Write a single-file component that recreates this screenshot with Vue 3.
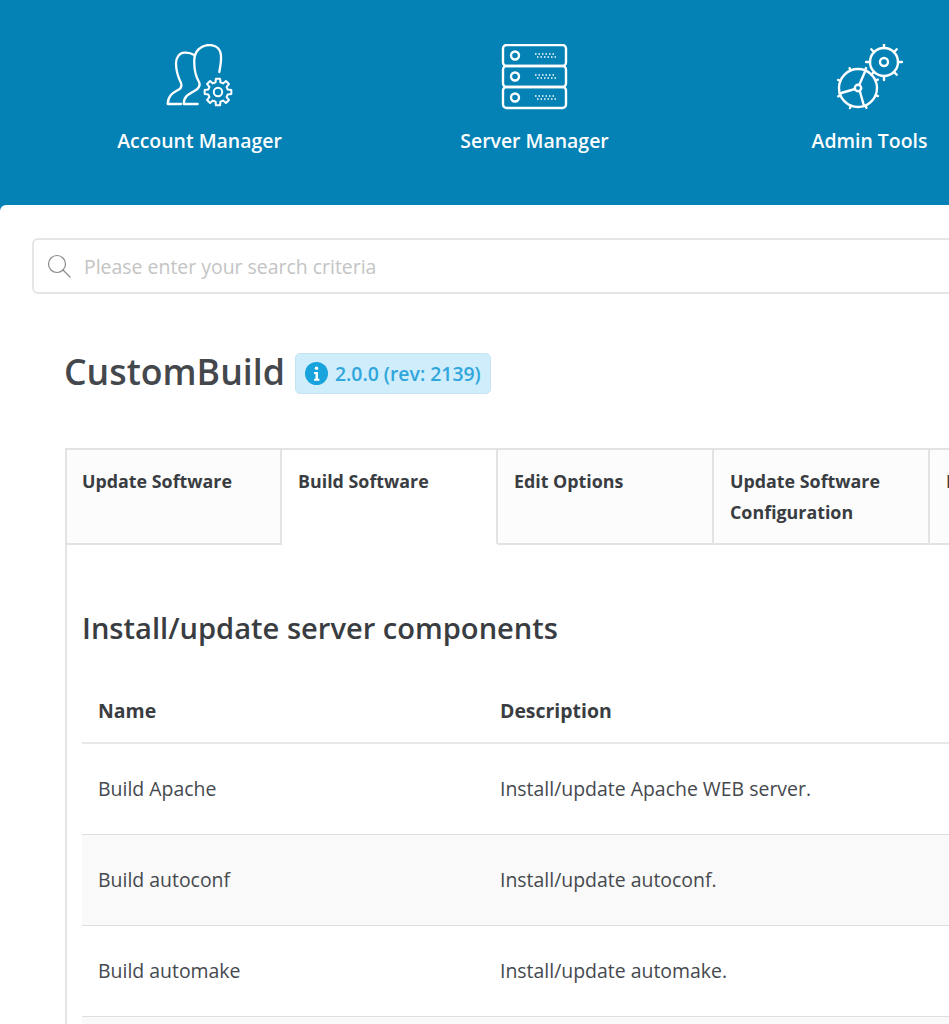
<script setup>
const tabs = [
  { label: 'Update Software' },
  { label: 'Build Software', active: true },
  { label: 'Edit Options' },
  { label: 'Update Software Configuration' },
  { label: 'PHP Extensions' },
]

const rows = [
  { name: 'Build Apache', desc: 'Install/update Apache WEB server.' },
  { name: 'Build autoconf', desc: 'Install/update autoconf.' },
  { name: 'Build automake', desc: 'Install/update automake.' },
]

const gearTeeth = [0, 45, 90, 135, 180, 225, 270, 315]

// outline of the small cog, one tooth every 45deg
const pt = (r, deg) => {
  const a = (deg - 90) * Math.PI / 180
  return `${(r * Math.cos(a)).toFixed(2)} ${(r * Math.sin(a)).toFixed(2)}`
}
const cogPath = gearTeeth.map((a) => {
  return `${a === 0 ? 'M' : 'L'}${pt(10, a - 14)}L${pt(13.5, a - 9)}L${pt(13.5, a + 9)}L${pt(10, a + 14)}`
}).join('') + 'Z'
</script>

<template>
  <div class="page">
    <header class="top">
      <a class="nav-item">
        <svg class="nav-icon" viewBox="0 0 70 66" width="70" height="66" fill="none" stroke="#fff" stroke-width="2.300" stroke-linecap="round" stroke-linejoin="round">
          <path d="M29.300 11C26 9 22 8.500 19.300 8.700 14 9 11 14 11 19.300 11 26 13 33 16 39 17 42 16 44 14.300 45.300 10 48 3 50 2.700 60H16" />
          <path d="M18.700 60C18.700 52 24 50 31 46 35 43 35 40 34 38 31 33 29 24 29.300 16 29.500 7 36 1 44.300 1 52 1 56 6 56 13 56.300 18 55 24 54.300 28M18.700 60H32.700" />
          <g transform="translate(53 48)" stroke-width="2">
            <path :d="cogPath" />
            <circle r="4.200" />
          </g>
        </svg>
        <span>Account Manager</span>
      </a>
      <a class="nav-item">
        <svg class="nav-icon" viewBox="0 0 70 66" width="70" height="66" fill="none" stroke="#fff" stroke-width="2.400">
          <rect x="3" y="1" width="63" height="21" rx="3.500" />
          <rect x="3" y="22" width="63" height="21" rx="3.500" />
          <rect x="3" y="43" width="63" height="21" rx="3.500" />
          <circle cx="15" cy="11.500" r="4" />
          <circle cx="15" cy="32.500" r="4" />
          <circle cx="15" cy="53.500" r="4" />
          <path d="M35 10h21M37 13h19M35 31h21M37 34h19M35 52h21M37 55h19" stroke-width="1.500" stroke-dasharray="1.500 2" />
        </svg>
        <span>Server Manager</span>
      </a>
      <a class="nav-item">
        <svg class="nav-icon" viewBox="0 0 70 66" width="70" height="66" fill="none" stroke="#fff" stroke-width="2.400" stroke-linecap="round">
          <g transform="translate(49 18)">
            <circle r="14" />
            <circle r="4" />
            <path v-for="a in gearTeeth" :key="a" :transform="`rotate(${a})`" d="M0-14V-18" />
          </g>
          <g transform="translate(23 44)">
            <circle r="19" />
            <circle r="3.200" />
            <path d="M1.200-3 7.700-18M-3 1-18.500 5.500M1.800 3 6 18" />
            <path v-for="a in gearTeeth" :key="a" :transform="`rotate(${a + 22})`" d="M0-19V-21.500" />
          </g>
        </svg>
        <span>Admin Tools</span>
      </a>
    </header>

    <main class="content">
      <div class="search">
        <svg viewBox="0 0 24 24" width="24" height="24" fill="none" stroke="#8a8a8a" stroke-width="1.200" stroke-linecap="round">
          <circle cx="10" cy="10" r="8.500" />
          <path d="M16 16l7 7" />
        </svg>
        <span class="placeholder">Please enter your search criteria</span>
      </div>

      <div class="inner">
        <div class="title-row">
          <h1>CustomBuild</h1>
          <div class="badge">
            <svg viewBox="0 0 24 24" width="23" height="23">
              <circle cx="12" cy="12" r="12" fill="#18a3dc" />
              <circle cx="12" cy="6.500" r="1.800" fill="#fff" />
              <path d="M9.500 10.500h4v7h1.500v2H9.500v-2H11v-5H9.500z" fill="#fff" />
            </svg>
            <span>2.0.0 (rev: 2139)</span>
          </div>
        </div>

        <div class="tabs">
          <div v-for="tab in tabs" :key="tab.label" class="tab" :class="{ active: tab.active }">{{ tab.label }}</div>
        </div>

        <section class="panel">
          <h2>Install/update server components</h2>
          <table>
            <thead>
              <tr>
                <th class="col-name">Name</th>
                <th>Description</th>
              </tr>
            </thead>
            <tbody>
              <tr v-for="row in rows" :key="row.name">
                <td>{{ row.name }}</td>
                <td>{{ row.desc }}</td>
              </tr>
              <tr class="cut"><td></td><td></td></tr>
            </tbody>
          </table>
        </section>
      </div>
    </main>
  </div>
</template>

<style>
html, body {
  margin: 0;
  background: #fff;
}
</style>

<style scoped>
.page {
  width: 949px;
  height: 1024px;
  overflow: hidden;
  background: #0481b5;
  font-family: "Open Sans", "Liberation Sans", sans-serif;
  color: #393d42;
}
.top {
  display: flex;
  height: 205px;
  padding-left: 32px;
  box-sizing: border-box;
}
.nav-item {
  flex: 0 0 335px;
  display: flex;
  flex-direction: column;
  align-items: center;
  padding-top: 44px;
  color: #fff;
  font-size: 19.450px;
  font-weight: 600;
}
.nav-icon {
  margin-bottom: 17px;
}
.content {
  width: 1300px;
  height: 819px;
  padding-top: 33px;
  box-sizing: border-box;
  background: #fff;
  border-top-left-radius: 6px;
}
.search {
  display: flex;
  align-items: center;
  gap: 13px;
  height: 56px;
  margin-left: 32px;
  padding-left: 13px;
  box-sizing: border-box;
  border: 2px solid #e6e6e6;
  border-radius: 6px;
}
.placeholder {
  font-size: 19.450px;
  color: #c4c4c4;
}
.inner {
  padding-left: 65px;
}
.title-row {
  display: flex;
  align-items: center;
  gap: 10px;
  height: 41px;
  margin-top: 59px;
}
h1 {
  margin: 0 0 5px -1px;
  font-size: 35.700px;
  font-weight: 600;
  line-height: 1.200;
  color: #44484d;
}
.badge {
  display: flex;
  align-items: center;
  gap: 7px;
  height: 41px;
  padding: 0 9px;
  box-sizing: border-box;
  background: #cfedfb;
  border: 1px solid #c5e4f2;
  border-radius: 5px;
  color: #2fa6dc;
  font-size: 19.400px;
  font-weight: 600;
}
.tabs {
  display: flex;
  margin-top: 54px;
}
.tab {
  flex: 0 0 216px;
  height: 97px;
  padding: 16px 16px 0;
  box-sizing: border-box;
  background: #fcfcfc;
  border: 2px solid #e3e3e3;
  border-left-width: 0;
  font-size: 17.850px;
  font-weight: 700;
  line-height: 31px;
  color: #393d42;
}
.tab:first-child {
  flex-basis: 217px;
  border-left-width: 2px;
  padding-left: 15px;
}
.tab.active {
  background: #fff;
  border-bottom-color: #fff;
}
.panel {
  width: 1200px;
  padding: 65px 16px 0 15px;
  box-sizing: border-box;
  border-left: 2px solid #e3e3e3;
}
h2 {
  margin: 0 0 34px;
  font-size: 29.100px;
  font-weight: 600;
  line-height: 36px;
  color: #393d42;
}
table {
  width: 100%;
  border-collapse: collapse;
  font-size: 19.450px;
}
th {
  height: 63px;
  padding: 0 16px 1px;
  box-sizing: border-box;
  text-align: left;
  font-weight: 700;
  border-bottom: 2px solid #e8e8e8;
}
.col-name {
  width: 402px;
}
td {
  height: 91px;
  padding: 0 16px;
  box-sizing: border-box;
  border-bottom: 1px solid #dedede;
  color: #45494e;
}
tbody tr:nth-child(even) {
  background: #f9f9f9;
}
</style>
